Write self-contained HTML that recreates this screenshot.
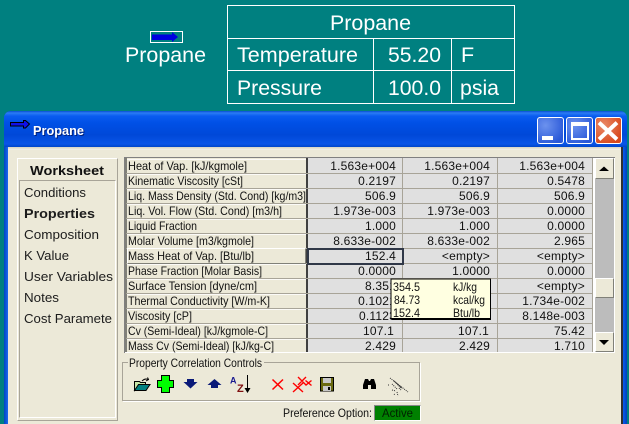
<!DOCTYPE html>
<html><head><meta charset="utf-8"><style>
html,body{margin:0;padding:0;width:629px;height:424px;overflow:hidden}
body{background:#008080;position:relative;font-family:"Liberation Sans",sans-serif}
div{position:absolute;box-sizing:border-box}
.l{background:#fff}
.hl{left:126px;width:467px;height:1px;background:#a8a498}
svg{position:absolute;left:0;top:0}
text{font-family:"Liberation Sans",sans-serif}
.w{fill:#fff;font-size:21.5px}
.n{fill:#1c1c1c;font-size:13px}
.g{fill:#111;font-size:12px}
.v{fill:#111;font-size:12px;text-anchor:end;letter-spacing:.2px}
</style></head><body>

<!-- top table -->
<div style="left:150px;top:31px;width:33px;height:12px;border:1px solid #fff"></div>
<div style="left:227px;top:5px;width:288px;height:99px;border:1px solid #fff"></div>
<div class="l" style="left:227px;top:38px;width:288px;height:1px"></div>
<div class="l" style="left:227px;top:70px;width:288px;height:1px"></div>
<div class="l" style="left:373px;top:38px;width:1px;height:65px"></div>
<div class="l" style="left:451px;top:38px;width:1px;height:65px"></div>

<!-- window -->
<div style="left:4px;top:111px;width:623px;height:313px;border-radius:7px 7px 0 0;background:#0052e0"></div>
<div style="left:4px;top:111px;width:623px;height:36px;border-radius:7px 7px 0 0;background:linear-gradient(#0a4fd0 0,#2a7cf5 2px,#0a5cf0 5px,#0050e6 12px,#0048d8 24px,#0a55e8 33px,#0046c8 36px)"></div>
<div style="left:4px;top:147px;width:4px;height:277px;background:linear-gradient(90deg,#0046c0,#1a68f0)"></div>
<div style="left:623px;top:147px;width:4px;height:277px;background:linear-gradient(90deg,#0a5cf0,#0040b8)"></div>

<!-- caption buttons -->
<div style="left:537px;top:117px;width:27px;height:27px;border:1px solid #fff;border-radius:3px;background:radial-gradient(circle at 30% 30%,#6c92ee,#2a58d8 80%)"></div>
<div style="left:542px;top:136px;width:11px;height:4px;background:#fff"></div>
<div style="left:566px;top:117px;width:27px;height:27px;border:1px solid #fff;border-radius:3px;background:radial-gradient(circle at 30% 30%,#6c92ee,#2a58d8 80%)"></div>
<div style="left:571px;top:122px;width:18px;height:18px;border:2px solid #fff;border-top-width:4px"></div>
<div style="left:595px;top:117px;width:27px;height:27px;border:1px solid #fff;border-radius:3px;background:radial-gradient(circle at 30% 30%,#ea8a68,#d8481c 80%)"></div>

<!-- client -->
<div style="left:8px;top:147px;width:613px;height:277px;background:#ece9d8"></div>
<div style="left:8px;top:147px;width:613px;height:3px;background:linear-gradient(#d8d4c4,#f4f2e8)"></div>
<div style="left:621px;top:147px;width:2px;height:277px;background:#303030"></div>

<!-- left tabs -->
<div style="left:17px;top:158px;width:101px;height:263px;border:1px solid #fff;border-right-color:#a8a498;border-bottom-color:#a8a498"></div>
<div style="left:19px;top:180px;width:97px;height:238px;border:1px solid #a8a498;border-right-color:#fff;border-bottom-color:#fff"></div>

<!-- grid -->
<div style="left:124px;top:157px;width:491px;height:196px;background:#fff;border:1px solid #808080;border-width:1px 0 0 1px"></div>
<div style="left:126px;top:158px;width:181px;height:194px;background:#ece9d8"></div>
<div style="left:307px;top:158px;width:286px;height:194px;background:#e0e0e0"></div>
<div style="left:125px;top:158px;width:2px;height:194px;background:#808078"></div>
<div style="left:306px;top:158px;width:2px;height:194px;background:#404040"></div>
<div style="left:402px;top:158px;width:1px;height:194px;background:#a8a498"></div>
<div style="left:497px;top:158px;width:1px;height:194px;background:#a8a498"></div>
<div style="left:592px;top:158px;width:1px;height:194px;background:#a8a498"></div>
<div class="hl" style="top:173px"></div><div class="hl" style="top:188px"></div><div class="hl" style="top:203px"></div><div class="hl" style="top:218px"></div><div class="hl" style="top:233px"></div><div class="hl" style="top:248px"></div><div class="hl" style="top:263px"></div><div class="hl" style="top:278px"></div><div class="hl" style="top:293px"></div><div class="hl" style="top:308px"></div><div class="hl" style="top:323px"></div><div class="hl" style="top:338px"></div>
<div style="left:127px;top:248px;width:179px;height:16px;border:1px solid #fff;border-right-color:#808078;border-bottom-color:#808078;background:#ece9d8"></div>
<div style="left:307px;top:248px;width:97px;height:17px;border:2px solid #303848;background:#e0e0e0"></div>

<!-- scrollbar -->
<div style="left:595px;top:158px;width:19px;height:194px;background:#bcbcbc"></div>
<div style="left:595px;top:158px;width:19px;height:21px;background:#ece9d8;border:1px solid #fff;border-right-color:#808078;border-bottom-color:#808078"></div>
<div style="left:595px;top:278px;width:19px;height:20px;background:#ece9d8;border:1px solid #fff;border-right-color:#808078;border-bottom-color:#808078"></div>
<div style="left:595px;top:332px;width:19px;height:20px;background:#ece9d8;border:1px solid #fff;border-right-color:#808078;border-bottom-color:#808078"></div>

<!-- group -->
<div style="left:122px;top:362px;width:298px;height:39px;border:1px solid #a8a498;box-shadow:1px 1px 0 #fff"></div>
<div style="left:128px;top:358px;width:136px;height:8px;background:#ece9d8"></div>
<div style="left:374px;top:405px;width:47px;height:16px;background:#008000;border:1px solid #fff;border-left-color:#888;border-top-color:#888"></div>

<svg width="629" height="424" viewBox="0 0 629 424">
<!-- top arrow + labels -->
<path d="M152 34.500h20V32l6 5-6 5v-2h-20z" fill="#0000e0"/>
<text class="w" x="125" y="62" textLength="81" lengthAdjust="spacingAndGlyphs">Propane</text>
<text class="w" x="330" y="30" textLength="81" lengthAdjust="spacingAndGlyphs">Propane</text>
<text class="w" x="237" y="62" textLength="121" lengthAdjust="spacingAndGlyphs">Temperature</text>
<text class="w" x="237" y="95" textLength="85" lengthAdjust="spacingAndGlyphs">Pressure</text>
<text class="w" x="388" y="62" textLength="53" lengthAdjust="spacingAndGlyphs">55.20</text>
<text class="w" x="388" y="95" textLength="53" lengthAdjust="spacingAndGlyphs">100.0</text>
<text class="w" x="461" y="62">F</text>
<text class="w" x="460" y="95" textLength="39" lengthAdjust="spacingAndGlyphs">psia</text>

<!-- title bar -->
<path d="M10.500 122.500h13v-2h2l4 3.500-4 4h-2v-2h-13z" fill="#1010e8" stroke="#000"/>
<text x="34" y="136" textLength="51" lengthAdjust="spacingAndGlyphs" font-size="13" font-weight="bold" fill="#00207a">Propane</text>
<text x="33" y="135" textLength="51" lengthAdjust="spacingAndGlyphs" font-size="13" font-weight="bold" fill="#fff">Propane</text>
<path d="M600.500 124L615.500 138M615.500 124L600.500 138" stroke="#fff" stroke-width="4" stroke-linecap="square"/>

<!-- nav -->
<text x="30" y="175" font-size="13" font-weight="bold" fill="#111" textLength="74" lengthAdjust="spacingAndGlyphs">Worksheet</text>
<text class="n" x="24" y="197" textLength="62" lengthAdjust="spacingAndGlyphs">Conditions</text>
<text class="n" x="24" y="218" font-weight="bold" fill="#111" textLength="71" lengthAdjust="spacingAndGlyphs">Properties</text>
<text class="n" x="24" y="239" textLength="75" lengthAdjust="spacingAndGlyphs">Composition</text>
<text class="n" x="24" y="260" textLength="45" lengthAdjust="spacingAndGlyphs">K Value</text>
<text class="n" x="24" y="281" textLength="89" lengthAdjust="spacingAndGlyphs">User Variables</text>
<text class="n" x="24" y="302" textLength="35" lengthAdjust="spacingAndGlyphs">Notes</text>
<text class="n" x="24" y="323" textLength="88" lengthAdjust="spacingAndGlyphs">Cost Paramete</text>

<!-- label col highlights -->
<path d="M127 159.500h179M127 174.500h179M127 189.500h179M127 204.500h179M127 219.500h179M127 234.500h179M127 264.500h179M127 279.500h179M127 294.500h179M127 309.500h179M127 324.500h179M127 339.500h179" stroke="#fff" stroke-width="1" opacity=".8"/>

<!-- labels -->
<text class="g" x="128" y="170" textLength="119" lengthAdjust="spacingAndGlyphs">Heat of Vap. [kJ/kgmole]</text>
<text class="g" x="128" y="185" textLength="115" lengthAdjust="spacingAndGlyphs">Kinematic Viscosity [cSt]</text>
<text class="g" x="128" y="200" textLength="178" lengthAdjust="spacingAndGlyphs">Liq. Mass Density (Std. Cond) [kg/m3]</text>
<text class="g" x="128" y="215" textLength="154" lengthAdjust="spacingAndGlyphs">Liq. Vol. Flow (Std. Cond) [m3/h]</text>
<text class="g" x="128" y="230" textLength="69" lengthAdjust="spacingAndGlyphs">Liquid Fraction</text>
<text class="g" x="128" y="245" textLength="126" lengthAdjust="spacingAndGlyphs">Molar Volume [m3/kgmole]</text>
<text class="g" x="128" y="260" textLength="126" lengthAdjust="spacingAndGlyphs">Mass Heat of Vap. [Btu/lb]</text>
<text class="g" x="128" y="275" textLength="134" lengthAdjust="spacingAndGlyphs">Phase Fraction [Molar Basis]</text>
<text class="g" x="128" y="290" textLength="129" lengthAdjust="spacingAndGlyphs">Surface Tension [dyne/cm]</text>
<text class="g" x="128" y="305" textLength="142" lengthAdjust="spacingAndGlyphs">Thermal Conductivity [W/m-K]</text>
<text class="g" x="128" y="320" textLength="64" lengthAdjust="spacingAndGlyphs">Viscosity [cP]</text>
<text class="g" x="128" y="335" textLength="140" lengthAdjust="spacingAndGlyphs">Cv (Semi-Ideal) [kJ/kgmole-C]</text>
<text class="g" x="128" y="350" textLength="146" lengthAdjust="spacingAndGlyphs">Mass Cv (Semi-Ideal) [kJ/kg-C]</text>

<!-- values -->
<text class="v" x="396" y="170">1.563e+004</text><text class="v" x="490" y="170">1.563e+004</text><text class="v" x="585" y="170">1.563e+004</text>
<text class="v" x="396" y="185">0.2197</text><text class="v" x="490" y="185">0.2197</text><text class="v" x="585" y="185">0.5478</text>
<text class="v" x="396" y="200">506.9</text><text class="v" x="490" y="200">506.9</text><text class="v" x="585" y="200">506.9</text>
<text class="v" x="396" y="215">1.973e-003</text><text class="v" x="490" y="215">1.973e-003</text><text class="v" x="585" y="215">0.0000</text>
<text class="v" x="396" y="230">1.000</text><text class="v" x="490" y="230">1.000</text><text class="v" x="585" y="230">0.0000</text>
<text class="v" x="396" y="245">8.633e-002</text><text class="v" x="490" y="245">8.633e-002</text><text class="v" x="585" y="245">2.965</text>
<text class="v" x="396" y="260">152.4</text><text class="v" x="490" y="260">&lt;empty&gt;</text><text class="v" x="585" y="260">&lt;empty&gt;</text>
<text class="v" x="396" y="275">0.0000</text><text class="v" x="490" y="275">1.0000</text><text class="v" x="585" y="275">0.0000</text>
<text class="v" x="396" y="290">8.351</text><text class="v" x="585" y="290">&lt;empty&gt;</text>
<text class="v" x="396" y="305">0.1021</text><text class="v" x="585" y="305">1.734e-002</text>
<text class="v" x="396" y="320">0.1123</text><text class="v" x="585" y="320">8.148e-003</text>
<text class="v" x="394" y="335">107.1</text><text class="v" x="489" y="335">107.1</text><text class="v" x="585" y="335">75.42</text>
<text class="v" x="396" y="350">2.429</text><text class="v" x="490" y="350">2.429</text><text class="v" x="585" y="350">1.710</text>

<!-- tooltip -->
<rect x="391" y="279" width="99.500" height="39.500" fill="#ffffe1" stroke="#000" stroke-width="1"/>
<path d="M490.500 280v39.500H392" fill="none" stroke="#000"/>
<text class="g" x="393" y="291" textLength="27" lengthAdjust="spacingAndGlyphs">354.5</text><text class="g" x="453" y="291" textLength="24" lengthAdjust="spacingAndGlyphs">kJ/kg</text>
<text class="g" x="394" y="304" textLength="26" lengthAdjust="spacingAndGlyphs">84.73</text><text class="g" x="453" y="304" textLength="32" lengthAdjust="spacingAndGlyphs">kcal/kg</text>
<text class="g" x="393" y="317" textLength="27" lengthAdjust="spacingAndGlyphs">152.4</text><text class="g" x="453" y="317" textLength="27" lengthAdjust="spacingAndGlyphs">Btu/lb</text>

<!-- scroll arrows -->
<path d="M599 171h10l-5-4.500z" fill="#000"/>
<path d="M599 340h10l-5 5z" fill="#000"/>

<!-- group legend + icons -->
<text class="g" x="129" y="367" textLength="133" lengthAdjust="spacingAndGlyphs">Property Correlation Controls</text>
<path d="M134.500 381.500h5l1 1h5v3h-6l-5 5z" fill="#c8e8a8" stroke="#000"/>
<path d="M134.500 390.500l4-6h11.500l-4 6z" fill="#008080" stroke="#000"/>
<path d="M142 381q3-3 6-1.500M146 381l2.500-1.500-1-2" fill="none" stroke="#000"/>
<path d="M161.500 375.500h8v5h4v7h-4v5h-8v-5h-4v-7h4z" fill="#00ff00" stroke="#000"/>
<path d="M187 379h7v3h3.500l-7 6.500-7-6.500h3.500z" fill="#0a1a78"/>
<path d="M214.500 379l7 6h-3.500v3h-7v-3h-3.500z" fill="#0a1a78"/>
<text x="230" y="383.500" font-size="9" font-weight="bold" fill="#1a1a90">A</text>
<text x="237" y="392" font-size="11" font-weight="bold" fill="#801010">Z</text>
<path d="M247.500 375v14" stroke="#000"/><path d="M244.500 388h6l-3 5z" fill="#000"/>
<path d="M272.500 379.500l10.500 10M283 379.500l-10.500 10" stroke="#f00" stroke-width="1.500" fill="none"/>
<path d="M293 383l10 9M303 383l-10 9M298 377l8 8M306 377l-8 8M305.500 380.500l6 5M311.500 380.500l-6 5" stroke="#f00" stroke-width="1.400" fill="none"/>
<rect x="320.500" y="377.500" width="13" height="13.500" fill="#6a6a10" stroke="#000"/><rect x="323" y="378" width="8" height="5" fill="#c8c8c8"/><rect x="323" y="386" width="8" height="5" fill="#c8c8c8"/><rect x="328" y="387" width="2" height="3" fill="#000"/>
<path d="M363 389v-4l2-6h3l1 2h1l1-2h3l2 6v4h-5v-4h-3v4z" fill="#000"/>
<path d="M390 378l18 14M394 381l8 7M388 385l2 0M392 384l5 5M396 383l5 5M392 390l4 1M397 392l1 4M394 394l1 1M399 388l2 2" stroke="#333" stroke-width="1" stroke-dasharray="1 1" fill="none"/>

<!-- preference -->
<text class="g" x="283" y="417" textLength="89" lengthAdjust="spacingAndGlyphs">Preference Option:</text>
<text x="382" y="417" font-size="12" fill="#002000" textLength="31" lengthAdjust="spacingAndGlyphs">Active</text>
</svg>
</body></html>
